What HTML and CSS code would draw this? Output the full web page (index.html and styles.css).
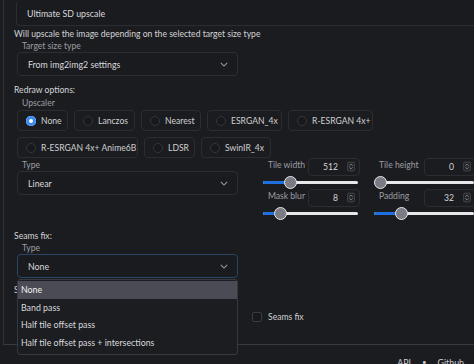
FILE: index.html
```html
<!DOCTYPE html>
<html>
<head>
<meta charset="utf-8">
<link rel="stylesheet" href="styles.css">
</head>
<body>
<div class="panel">
  <div class="select top-select"><span>Ultimate SD upscale</span></div>
  <div class="desc">Will upscale the image depending on the selected target size type</div>
  <div class="label">Target size type</div>
  <div class="select half"><span>From img2img2 settings</span><svg class="chev" viewBox="0 0 10 6"><path d="M1 1l4 4 4-4"/></svg></div>
  <div class="heading">Redraw options:</div>
  <div class="label up">Upscaler</div>
  <div class="radios">
    <div class="radio on"><i></i>None</div>
    <div class="radio"><i></i>Lanczos</div>
    <div class="radio"><i></i>Nearest</div>
    <div class="radio"><i></i>ESRGAN_4x</div>
    <div class="radio"><i></i>R-ESRGAN 4x+</div>
    <div class="radio"><i></i>R-ESRGAN 4x+ Anime6B</div>
    <div class="radio"><i></i>LDSR</div>
    <div class="radio"><i></i>SwinIR_4x</div>
  </div>
  <div class="row">
    <div class="col-left">
      <div class="label">Type</div>
      <div class="select"><span>Linear</span><svg class="chev" viewBox="0 0 10 6"><path d="M1 1l4 4 4-4"/></svg></div>
    </div>
    <div class="col-num c1">
      <div class="num">
        <div class="numhead"><span class="nlabel">Tile width</span><div class="nbox"><span>512</span><svg class="spin" viewBox="0 0 10 12"><rect x="0.5" y="0.5" width="9" height="11" rx="2"/><path d="M3 5l2-2 2 2M3 7l2 2 2-2"/></svg></div></div>
        <div class="slider"><div class="fill" style="width:27px"></div><div class="thumb" style="left:27px"></div></div>
      </div>
      <div class="num">
        <div class="numhead"><span class="nlabel">Mask blur</span><div class="nbox"><span>8</span><svg class="spin" viewBox="0 0 10 12"><rect x="0.5" y="0.5" width="9" height="11" rx="2"/><path d="M3 5l2-2 2 2M3 7l2 2 2-2"/></svg></div></div>
        <div class="slider"><div class="fill" style="width:17px"></div><div class="thumb" style="left:17px"></div></div>
      </div>
    </div>
    <div class="col-num c2">
      <div class="num">
        <div class="numhead"><span class="nlabel">Tile height</span><div class="nbox"><span>0</span><svg class="spin" viewBox="0 0 10 12"><rect x="0.5" y="0.5" width="9" height="11" rx="2"/><path d="M3 5l2-2 2 2M3 7l2 2 2-2"/></svg></div></div>
        <div class="slider"><div class="fill" style="width:6px"></div><div class="thumb" style="left:6px"></div></div>
      </div>
      <div class="num">
        <div class="numhead"><span class="nlabel">Padding</span><div class="nbox"><span>32</span><svg class="spin" viewBox="0 0 10 12"><rect x="0.5" y="0.5" width="9" height="11" rx="2"/><path d="M3 5l2-2 2 2M3 7l2 2 2-2"/></svg></div></div>
        <div class="slider"><div class="fill" style="width:27px"></div><div class="thumb" style="left:27px"></div></div>
      </div>
    </div>
  </div>
  <div class="heading seams">Seams fix:</div>
  <div class="label">Type</div>
  <div class="dropwrap">
    <div class="select half focus"><span>None</span><svg class="chev" viewBox="0 0 10 6"><path d="M1 1l4 4 4-4"/></svg></div>
    <ul class="options">
      <li class="hl">None</li>
      <li>Band pass</li>
      <li>Half tile offset pass</li>
      <li>Half tile offset pass + intersections</li>
    </ul>
  </div>
  <div class="heading hidden-h">Seams fix settings:</div>
  <div class="checkrow"><span class="cb"></span>Seams fix</div>
</div>
<div class="footer"><span>API</span><span class="dot">•</span><span>Github</span></div>
</body>
</html>
```
FILE: styles.css
```css
* { box-sizing: border-box; }
html, body { margin: 0; padding: 0; }
body {
  background: #1b1c1f;
  color: #d4d5d8;
  font-family: Lato, "Noto Sans", sans-serif;
  font-size: 8.6px;
  width: 474px;
  height: 364px;
  overflow: hidden;
}
.panel {
  margin-left: 3px;
  height: 345px;
  border-left: 1px solid #303135;
  border-bottom: 1px solid #3a3b40;
  padding: 1px 0 0 10px;
  position: relative;
}
.select {
  height: 24px;
  border: 1px solid #2c2d32;
  border-radius: 4px;
  background: #1a1b1e;
  display: flex;
  align-items: center;
  justify-content: space-between;
  padding: 0 9px 0 10px;
  margin-left: 3px;
  font-size: 8.8px;
  color: #d9dadd;
  white-space: nowrap;
}
.top-select { height: 25px; margin-left: 2px; margin-right: -10px; border-top-color: transparent; }
.half { width: 221px; }
.chev { width: 8px; height: 5px; fill: none; stroke: #9a9ca2; stroke-width: 1.3; flex-shrink: 0; }
.desc { line-height: 12px; margin-top: 2px; color: #d4d5d8; white-space: nowrap; }
.label { line-height: 12px; color: #9b9ea4; padding-left: 8px; }
.heading { line-height: 12px; color: #d4d5d8; white-space: nowrap; }
.half + .heading { margin-top: 8px; }
.label.up { margin-top: 1px; }
.radios {
  display: flex;
  flex-wrap: wrap;
  gap: 6px 6px;
  margin-left: 3px;
  margin-top: 1px;
  width: 380px;
}
.radio {
  height: 21px;
  border: 1px solid #2c2d32;
  border-radius: 4px;
  display: flex;
  align-items: center;
  padding: 0 0 0 8px;
  gap: 5px;
  color: #cfd0d3;
  white-space: nowrap;
  flex-shrink: 0;
}
.radio i {
  width: 10px;
  height: 10px;
  flex-shrink: 0;
  border-radius: 50%;
  border: 1px solid #35363b;
  background: #18191c;
  display: block;
}
.radio.on i {
  border: none;
  background: #3b8cf2;
  box-shadow: inset 0 0 0 3px #3b8cf2, inset 0 0 0 10px #ffffff;
}
.radio:nth-child(1) { width: 51px; }
.radio:nth-child(2) { width: 61px; }
.radio:nth-child(3) { width: 60px; }
.radio:nth-child(4) { width: 75px; }
.radio:nth-child(5) { width: 85px; }
.radio:nth-child(6) { width: 121px; }
.radio:nth-child(7) { width: 51px; }
.radio:nth-child(8) { width: 70px; }
.row { display: flex; margin-top: 1px; }
.col-left { width: 238px; }
.col-left .select { width: 221px; margin-top: 0; }
.col-num { display: flex; flex-direction: column; gap: 0; margin-top: -2px; }
.c1 { margin-left: 13px; width: 98px; }
.c2 { margin-left: 14px; width: 100px; }
.num { height: 31px; }
.numhead { display: flex; align-items: center; justify-content: space-between; height: 19px; padding-left: 5px; }
.nlabel { color: #9b9ea4; margin-top: -4px; white-space: nowrap; }
.nbox {
  width: 52px;
  height: 18px;
  border: 1px solid #2c2d32;
  border-radius: 4px;
  display: flex;
  align-items: center;
  justify-content: flex-end;
  gap: 9px;
  padding-right: 4px;
  color: #d4d5d8;
}
.c2 .nbox { margin-right: -2px; }
.spin { width: 8px; height: 11px; fill: #25262a; stroke: #55575d; stroke-width: 0.8; }
.spin path { fill: none; stroke: #9a9ca2; stroke-width: 0.9; }
.slider { position: relative; height: 3px; background: #e8e8ea; border-radius: 2px; margin-top: 5px; width: 95px; }
.c2 .slider { width: 100px; }
.fill { position: absolute; left: 0; top: 0; bottom: 0; background: #1f6fe0; border-radius: 2px; }
.thumb {
  position: absolute;
  top: -5px;
  width: 13px;
  height: 13px;
  margin-left: -6px;
  border-radius: 50%;
  background: #7a7b84;
  border: 1px solid #e8e8ea;
}
.seams { margin-top: 11px; }
.dropwrap { position: relative; z-index: 2; }
.focus { border-color: #2a4566; }
.options {
  position: absolute;
  left: 3px;
  top: 25px;
  width: 221px;
  margin: 0;
  padding: 1px 0 3px;
  list-style: none;
  background: #1c1d21;
  border: 1px solid #38393e;
  border-radius: 3px;
  color: #d9dadd;
  font-size: 8.8px;
}
.options li { height: 17.5px; line-height: 17.5px; padding-left: 3px; white-space: nowrap; }
.options li.hl { background: #4a4b54; color: #f0f0f2; }
.hidden-h { margin-top: 6px; }
.checkrow {
  display: flex;
  align-items: center;
  gap: 6px;
  margin-left: 238px;
  margin-top: 16px;
  color: #cfd0d3;
}
.cb { width: 10px; height: 10px; border: 1px solid #3a3b40; border-radius: 2px; background: #18191c; }
.footer {
  display: flex;
  gap: 11px;
  justify-content: flex-end;
  padding-right: 10px;
  margin-top: 12px;
  color: #c9cacd;
  font-size: 8.8px;
}
.dot { font-size: 8px; }
```
